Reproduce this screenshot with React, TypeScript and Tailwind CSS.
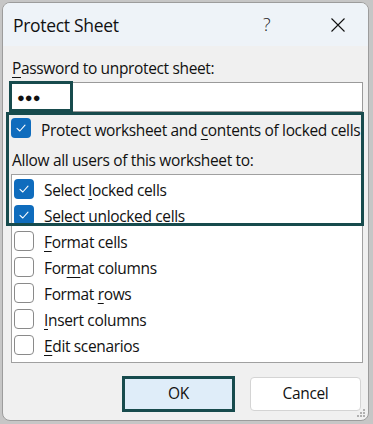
import React from "react";

const TEAL = "border-[#174b4d]";

const Check = ({ checked }: { checked: boolean }) =>
  checked ? (
    <span className="w-[20px] h-[20px] rounded-[4px] bg-[#0f6cbd] flex items-center justify-center shrink-0">
      <svg width="12" height="12" viewBox="0 0 12 12" fill="none">
        <path d="M2 6.3 L4.8 9 L10 3.2" stroke="white" strokeWidth="1.1" strokeLinecap="round" strokeLinejoin="round" />
      </svg>
    </span>
  ) : (
    <span className="w-[20px] h-[20px] rounded-[4px] bg-white border border-[#8a8a8a] shrink-0" />
  );

const Label = ({ pre, key_, post }: { pre: string; key_: string; post: string }) => (
  <span>
    {pre}
    <span className="underline underline-offset-[3px] decoration-1">{key_}</span>
    {post}
  </span>
);

const items = [
  { pre: "Select ", k: "l", post: "ocked cells", checked: true },
  { pre: "Select ", k: "u", post: "nlocked cells", checked: true },
  { pre: "", k: "F", post: "ormat cells", checked: false },
  { pre: "For", k: "m", post: "at columns", checked: false },
  { pre: "Format ", k: "r", post: "ows", checked: false },
  { pre: "", k: "I", post: "nsert columns", checked: false },
  { pre: "", k: "E", post: "dit scenarios", checked: false },
];

export default function App() {
  return (
    <div className="w-[373px] h-[424px] bg-[#c6c6c6] pt-[2px] pl-[2px] overflow-hidden" style={{ fontFamily: "'Open Sans', 'Noto Sans', sans-serif" }}>
      <div className="w-[367px] h-[419px] rounded-[8px] border border-[#9c9c9c] bg-[#f0f0f0] overflow-hidden relative text-[#111]">
        {/* title bar */}
        <div className="h-[43px] bg-[#eef3f8] flex items-center pl-[10px] relative">
          <span className="text-[17.5px] leading-[20px] tracking-[-0.3px]">Protect Sheet</span>
          <span className="absolute left-[260px] top-[11px] text-[18px] leading-[20px] font-light text-[#222]">?</span>
          <svg className="absolute left-[327px] top-[14px]" width="16" height="16" viewBox="0 0 16 16">
            <path d="M1.5 1.5 L14.5 14.5 M14.5 1.5 L1.5 14.5" stroke="#111" strokeWidth="1.1" />
          </svg>
        </div>

        {/* body */}
        <div className="pt-[12px] pl-[8px] relative text-[15.5px] tracking-[-0.35px]">
          <div className="h-[20px] leading-[20px] pl-[1px]">
            <Label pre="" key_="P" post="assword to unprotect sheet:" />
          </div>
          <div className="mt-[4px] w-[352px] h-[30px] bg-white border border-[#9a9a9a] relative flex items-center pl-[5px]">
            <span className="text-[13px] tracking-[0px] leading-none">●●●</span>
            <div className={`absolute left-[-3px] top-[-2px] w-[64px] h-[31px] border-[3px] ${TEAL}`} />
          </div>
          <div className="mt-[6px] h-[20px] flex items-center gap-[10px]">
            <Check checked />
            <span className="leading-[20px] pt-[4px]">
              <Label pre="Protect worksheet and " key_="c" post="ontents of locked cells" />
            </span>
          </div>
          <div className="mt-[12px] h-[20px] leading-[20px] pl-[1px]">Allow all users of this worksheet to:</div>
          <div className="mt-[4px] w-[352px] h-[189px] bg-white border border-[#a0a0a0] pl-[2px]">
            {items.map((it) => (
              <div key={it.pre + it.k} className="h-[26px] flex items-center gap-[10px] pt-[1px]">
                <Check checked={it.checked} />
                <span className="leading-[20px] pt-[2px]">
                  <Label pre={it.pre} key_={it.k} post={it.post} />
                </span>
              </div>
            ))}
          </div>
          <div className={`absolute left-[3px] top-[66px] w-[358px] h-[114px] border-[3px] ${TEAL}`} />

          {/* buttons */}
          <div className="mt-[13px] flex pl-[111px] gap-[15px]">
            <button className={`w-[113px] h-[36px] bg-[#dfedf9] border-[3px] ${TEAL} text-[15.5px]`}>OK</button>
            <button className="w-[111px] h-[34px] mt-[1px] bg-white border border-[#d4d4d4] rounded-[4px] text-[15.5px]">
              Cancel
            </button>
          </div>
        </div>

        {/* resize grip */}
        <svg className="absolute right-[2px] bottom-[2px]" width="10" height="10" viewBox="0 0 10 10">
          <rect x="7" y="1" width="2" height="2" fill="#b0b0b0" />
          <rect x="4" y="4" width="2" height="2" fill="#b0b0b0" />
          <rect x="7" y="4" width="2" height="2" fill="#b0b0b0" />
          <rect x="1" y="7" width="2" height="2" fill="#b0b0b0" />
          <rect x="4" y="7" width="2" height="2" fill="#b0b0b0" />
          <rect x="7" y="7" width="2" height="2" fill="#b0b0b0" />
        </svg>
      </div>
    </div>
  );
}
